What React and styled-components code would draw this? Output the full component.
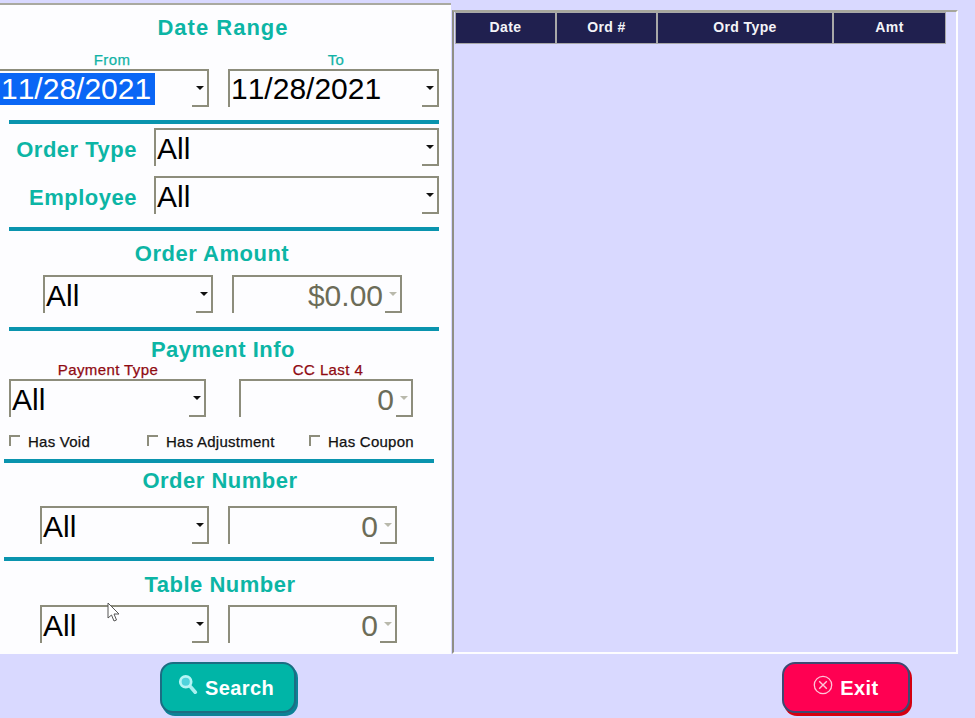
import React from "react";
import styled, { createGlobalStyle } from "styled-components";

const GlobalStyle = createGlobalStyle`
  html, body {
    margin: 0;
    padding: 0;
    background: #d9d9ff;
    font-family: "Liberation Sans", Arial, sans-serif;
  }
`;

const Screen = styled.div`
  width: 975px;
  height: 718px;
  overflow: hidden;
  background: #d9d9ff;
`;
const Main = styled.div`
  display: flex;
  height: 654px;
`;
const FilterPanel = styled.div`
  position: relative;
  width: 451px;
  height: 651px;
  margin-top: 3px;
  box-sizing: border-box;
  border-top: 2px solid #a9a9a0;
  background: #fdfdff;
  overflow: hidden;
`;
const ResultPanel = styled.div`
  width: 506px;
  height: 644px;
  margin: 10px 0 0 1px;
  box-sizing: border-box;
  border-top: 2px solid #a6a69c;
  border-left: 2px solid #8f8f86;
  border-right: 2px solid #fdfdff;
  border-bottom: 2px solid #fdfdff;
`;
const HeaderRow = styled.div`
  display: grid;
  grid-template-columns: 101px 101px 176px 113px;
  width: 491px;
  height: 32px;
  margin-left: 1px;
`;
const HeaderCell = styled.div`
  display: flex;
  align-items: center;
  justify-content: center;
  box-sizing: border-box;
  padding-bottom: 2px;
  background: #20204f;
  border: 1px solid #a8a8a8;
  color: #f4f4f8;
  font-size: 14px;
  font-weight: 700;
  letter-spacing: 0.4px;
`;
const Title = styled.div`
  width: ${(p) => p.$center * 2}px;
  margin-top: ${(p) => p.$top}px;
  height: 24px;
  line-height: 24px;
  text-align: center;
  color: #0cb5a5;
  font-size: 22px;
  font-weight: 700;
  letter-spacing: ${(p) => p.$spacing || 0.5}px;
  white-space: nowrap;
`;
const SubRow = styled.div`
  display: flex;
  margin-top: ${(p) => p.$top}px;
  height: 14px;
`;
const SubLabel = styled.div`
  width: ${(p) => p.$w}px;
  line-height: 14px;
  text-align: center;
  color: ${(p) => p.$color};
  font-size: 15px;
  letter-spacing: 0.4px;
  -webkit-text-stroke: 0.25px ${(p) => p.$color};
`;
const Row = styled.div`
  display: flex;
  align-items: center;
  gap: ${(p) => p.$gap}px;
  margin-top: ${(p) => p.$top}px;
  margin-left: ${(p) => p.$left}px;
  height: 38px;
`;
const RowLabel = styled.div`
  width: 137px;
  padding-top: 5px;
  text-align: right;
  color: #0cb5a5;
  font-size: 22px;
  font-weight: 700;
  letter-spacing: 0.5px;
  white-space: nowrap;
`;
const Field = styled.div`
  position: relative;
  display: flex;
  align-items: center;
  justify-content: ${(p) => (p.$disabled ? "flex-end" : "flex-start")};
  box-sizing: border-box;
  flex: none;
  width: ${(p) => p.$w}px;
  height: 38px;
  padding: ${(p) => (p.$disabled ? "2px 19px 0 0" : "2px 0 0 1px")};
  border-top: 2px solid #8d8d7c;
  border-left: 2px solid #8d8d7c;
  color: ${(p) => (p.$disabled ? "#6c6c58" : "#000")};
  font-size: 30px;
  font-kerning: none;
  white-space: nowrap;
`;
const DateText = styled.span`
  display: block;
  margin-top: -2px;
  height: 32px;
  line-height: 32px;
`;
const Selected = styled(DateText)`
  margin-left: -1px;
  padding: 0 4px 0 1px;
  background: #0a66f5;
  color: #fff;
`;
const DropButton = styled.div`
  position: absolute;
  top: -2px;
  right: 0;
  bottom: 0;
  width: 17px;
  box-sizing: border-box;
  border-right: 2px solid #8d8d7c;
  border-bottom: 2px solid #8d8d7c;
  display: flex;
  align-items: center;
  justify-content: center;
  &::after {
    content: "";
    margin: 2px 0 0 1px;
    border-left: 4px solid transparent;
    border-right: 4px solid transparent;
    border-top: 4px solid ${(p) => (p.$disabled ? "#b9b9ac" : "#111")};
  }
`;
const Divider = styled.div`
  width: 430px;
  height: 4px;
  margin-top: ${(p) => p.$top}px;
  margin-left: ${(p) => p.$left}px;
  background: #0a94ae;
`;
const CheckRow = styled.div`
  display: grid;
  grid-template-columns: 138px 162px auto;
  margin: 16px 0 0 9px;
  height: 16px;
`;
const CheckItem = styled.div`
  display: flex;
  align-items: center;
  gap: 8px;
  color: #111;
  font-size: 15px;
  letter-spacing: 0.25px;
  -webkit-text-stroke: 0.25px #111;
  white-space: nowrap;
`;
const CheckBox = styled.span`
  width: 11px;
  height: 11px;
  margin-top: -3px;
  box-sizing: border-box;
  border-top: 2px solid #8d8d7c;
  border-left: 2px solid #8d8d7c;
`;
const Pointer = styled.svg`
  position: absolute;
  left: 107px;
  top: 597px;
`;
const Footer = styled.div`
  display: flex;
  align-items: flex-start;
  gap: 486px;
  padding: 8px 0 0 160px;
`;
const ActionButton = styled.button`
  display: flex;
  align-items: center;
  justify-content: center;
  gap: 7px;
  box-sizing: border-box;
  width: ${(p) => p.$w}px;
  height: 51px;
  padding: 2px ${(p) => p.$right || 0}px 0 0;
  border: 2px solid ${(p) => p.$edge};
  border-radius: 13px;
  background: ${(p) => p.$bg};
  box-shadow: 2px 3px 0 ${(p) => p.$shade};
  color: #fff;
  font-family: inherit;
  font-size: 20px;
  font-weight: 700;
  letter-spacing: 0.4px;
`;
const ButtonIcon = styled.svg`
  margin-top: ${(p) => p.$lift}px;
`;

const TEAL = "#12b3a6";
const RED = "#8f0a12";

function DropField({ w, disabled, children }) {
  return (
    <Field $w={w} $disabled={disabled}>
      {children}
      <DropButton $disabled={disabled} />
    </Field>
  );
}

function SearchIcon() {
  return (
    <ButtonIcon $lift={-10} width="20" height="20" viewBox="0 0 22 22">
      <line x1="12" y1="12" x2="19" y2="20" stroke="#a9f0f0" strokeWidth="4" strokeLinecap="round" />
      <circle cx="8.5" cy="8.5" r="6" fill="#4fd3dc" stroke="#b5f5f5" strokeWidth="3" />
    </ButtonIcon>
  );
}

function ExitIcon() {
  return (
    <ButtonIcon $lift={-8} width="20" height="20" viewBox="0 0 20 20">
      <circle cx="10" cy="10" r="8.7" fill="none" stroke="#ffc4d8" strokeWidth="1.3" />
      <path d="M6.2 6.2 L13.8 13.8 M13.8 6.2 L6.2 13.8" stroke="#ffc4d8" strokeWidth="1.4" />
    </ButtonIcon>
  );
}

export default function App() {
  return (
    <Screen>
      <GlobalStyle />
      <Main>
        <FilterPanel>
          <Title $center={223} $top={11} $spacing={1}>Date Range</Title>
          <SubRow $top={13}>
            <SubLabel $w={224} $color={TEAL}>From</SubLabel>
            <SubLabel $w={224} $color={TEAL}>To</SubLabel>
          </SubRow>
          <Row $top={2} $left={-2} $gap={19}>
            <DropField w={211}><Selected>11/28/2021</Selected></DropField>
            <DropField w={211}><DateText>11/28/2021</DateText></DropField>
          </Row>
          <Divider $top={13} $left={9} />

          <Row $top={4} $left={0} $gap={17}>
            <RowLabel>Order Type</RowLabel>
            <DropField w={285}>All</DropField>
          </Row>
          <Row $top={10} $left={0} $gap={17}>
            <RowLabel>Employee</RowLabel>
            <DropField w={285}>All</DropField>
          </Row>
          <Divider $top={13} $left={9} />

          <Title $center={212} $top={11}>Order Amount</Title>
          <Row $top={9} $left={43} $gap={19}>
            <DropField w={170}>All</DropField>
            <DropField w={170} disabled>$0.00</DropField>
          </Row>
          <Divider $top={14} $left={9} />

          <Title $center={223} $top={7}>Payment Info</Title>
          <SubRow $top={1}>
            <SubLabel $w={216} $color={RED}>Payment Type</SubLabel>
            <SubLabel $w={224} $color={RED}>CC Last 4</SubLabel>
          </SubRow>
          <Row $top={2} $left={9} $gap={33}>
            <DropField w={197}>All</DropField>
            <DropField w={174} disabled>0</DropField>
          </Row>
          <CheckRow>
            <CheckItem><CheckBox />Has Void</CheckItem>
            <CheckItem><CheckBox />Has Adjustment</CheckItem>
            <CheckItem><CheckBox />Has Coupon</CheckItem>
          </CheckRow>
          <Divider $top={10} $left={4} />

          <Title $center={220} $top={6}>Order Number</Title>
          <Row $top={13} $left={40} $gap={19}>
            <DropField w={169}>All</DropField>
            <DropField w={169} disabled>0</DropField>
          </Row>
          <Divider $top={13} $left={4} />

          <Title $center={220} $top={12}>Table Number</Title>
          <Row $top={8} $left={40} $gap={19}>
            <DropField w={169}>All</DropField>
            <DropField w={169} disabled>0</DropField>
          </Row>

          <Pointer width="14" height="22" viewBox="0 0 14 22">
            <path
              d="M1 1 L1 16 L4.5 13 L7 19 L9.5 18 L7 12 L12 12 Z"
              fill="#fff"
              stroke="#555"
              strokeWidth="1"
            />
          </Pointer>
        </FilterPanel>

        <ResultPanel>
          <HeaderRow>
            <HeaderCell>Date</HeaderCell>
            <HeaderCell>Ord #</HeaderCell>
            <HeaderCell>Ord Type</HeaderCell>
            <HeaderCell>Amt</HeaderCell>
          </HeaderRow>
        </ResultPanel>
      </Main>

      <Footer>
        <ActionButton $w={136} $right={4} $bg="#00b5a7" $edge="#1c6d83" $shade="#0c8296">
          <SearchIcon />
          Search
        </ActionButton>
        <ActionButton $w={128} $bg="#ff0052" $edge="#3d4a72" $shade="#d4000f">
          <ExitIcon />
          Exit
        </ActionButton>
      </Footer>
    </Screen>
  );
}
